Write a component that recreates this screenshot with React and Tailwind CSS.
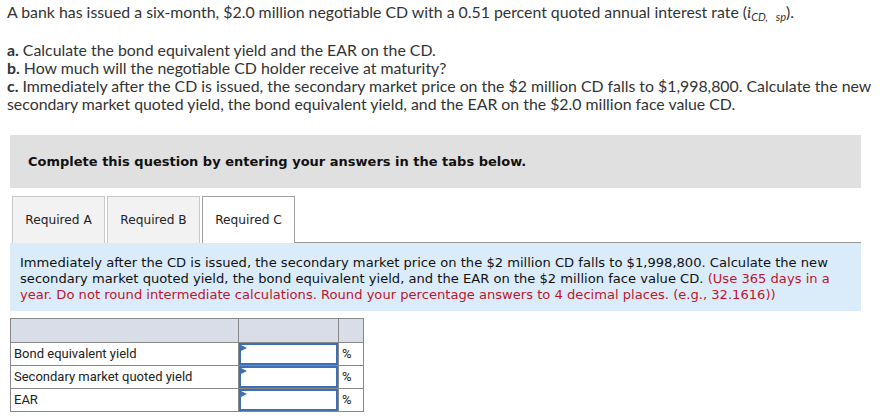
export default function App() {
  const rows = ["Bond equivalent yield", "Secondary market quoted yield", "EAR"];
  return (
    <div className="min-h-screen w-full bg-white">
      {/* question text */}
      <div className="px-[7px] pt-[3px] text-[15.85px] leading-[18px] text-[#333]" style={{ fontFamily: "Lato, 'Open Sans', sans-serif" }}>
        <p>
          A bank has issued a six-month, $2.0 million negotiable CD with a 0.51 percent quoted annual interest rate (
          <i className="font-serif">i</i>
          <sub className="text-[11px] italic">CD,&nbsp;&nbsp; sp</sub>).
        </p>
        <p className="mt-[19px]"><b>a.</b> Calculate the bond equivalent yield and the EAR on the CD.</p>
        <p><b>b.</b> How much will the negotiable CD holder receive at maturity?</p>
        <p>
          <b>c.</b> Immediately after the CD is issued, the secondary market price on the $2 million CD falls to $1,998,800. Calculate the new
          secondary market quoted yield, the bond equivalent yield, and the EAR on the $2.0 million face value CD.
        </p>
      </div>

      <div className="ml-[10px] w-[851px]" style={{ fontFamily: "'DejaVu Sans', Verdana, sans-serif" }}>
        {/* instruction banner */}
        <div className="mt-[22px] flex h-[53px] items-center bg-[#e0e0e0] pl-[18px] text-[13px] font-bold text-[#111]">
          Complete this question by entering your answers in the tabs below.
        </div>

        {/* tabs */}
        <div className="mt-[8px] flex items-end">
          <div className="ml-[2px] flex h-[47px] w-[93px] items-center justify-center border border-b-0 border-[#c8c8c8] bg-[#f2f2f2] text-[12.2px] text-[#222]">
            Required A
          </div>
          <div className="ml-[2px] flex h-[47px] w-[93px] items-center justify-center border border-b-0 border-[#c8c8c8] bg-[#f2f2f2] text-[12.2px] text-[#222]">
            Required B
          </div>
          <div className="ml-[2px] flex h-[47px] w-[93px] items-center justify-center border border-b-0 border-[#a0a0a0] bg-white text-[12.2px] text-[#222]">
            Required C
          </div>
          <div className="flex-1 border-b border-[#999]" />
        </div>

        {/* prompt */}
        <div className="bg-[#daecf9] px-[10px] pb-[8px] pt-[12px] text-[13.1px] leading-[16px] text-[#111]">
          Immediately after the CD is issued, the secondary market price on the $2 million CD falls to $1,998,800. Calculate the new
          secondary market quoted yield, the bond equivalent yield, and the EAR on the $2 million face value CD.{" "}
          <span className="text-[#c0142f]">
            (Use 365 days in a year. Do not round intermediate calculations. Round your percentage answers to 4 decimal places. (e.g., 32.1616))
          </span>
        </div>

        {/* answer table */}
        <table className="mt-[7px] border-collapse text-[13px] text-[#222]" style={{ fontFamily: "Roboto, 'Liberation Sans', sans-serif" }}>
          <tbody>
            <tr className="h-[24px] bg-[#d9dde7]">
              <td className="w-[228px] border border-[#888]" />
              <td className="w-[100px] border border-[#888]" />
              <td className="w-[25px] border border-[#888]" />
            </tr>
            {rows.map((r) => (
              <tr key={r} className="h-[23px]">
                <td className="border border-[#888] px-[3px]">{r}</td>
                <td className="border border-[#888] p-0">
                  <div className="relative h-[22px] w-full border-2 border-[#3d6fb6] bg-white">
                    <span className="absolute left-0 top-0 h-0 w-0 border-y-[3px] border-l-[6px] border-y-transparent border-l-[#3d6fb6]" />
                  </div>
                </td>
                <td className="border border-[#888] px-[3px]">%</td>
              </tr>
            ))}
          </tbody>
        </table>
      </div>
    </div>
  );
}
